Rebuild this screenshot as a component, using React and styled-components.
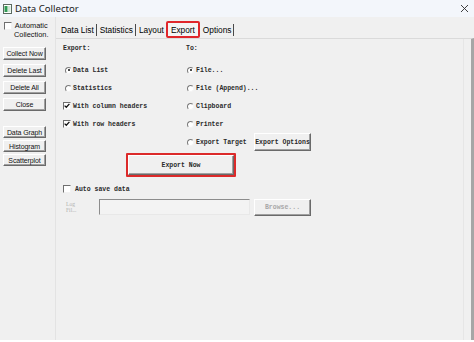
import React from "react";
import styled, { createGlobalStyle } from "styled-components";

const Global = createGlobalStyle`
  html, body { margin: 0; padding: 0; background: #ffffff; }
  * { box-sizing: border-box; }
`;

const Window = styled.div`
  width: 474px;
  height: 342px;
  display: flex;
  flex-direction: column;
  background: #f0f0f0;
  overflow: hidden;
  font-family: "Liberation Sans", Arial, sans-serif;
`;

const TitleBar = styled.div`
  height: 17px;
  flex: none;
  display: flex;
  align-items: center;
  padding: 0 5px 0 3px;
  background: #f3f6fb;
`;

const TitleText = styled.span`
  font-family: "Noto Sans", "Open Sans", sans-serif;
  font-size: 9.6px;
  color: #1b1b1b;
  margin-left: 3px;
  flex: 1;
`;

const Body = styled.div`
  flex: 1;
  display: flex;
  min-height: 0;
  border-bottom: 2px solid #ffffff;
`;

const Sidebar = styled.div`
  width: 56px;
  flex: none;
  display: flex;
  flex-direction: column;
  padding: 5px 0 0 3px;
  border-right: 1px solid #e3e3e3;
`;

const AutoRow = styled.div`
  display: flex;
  align-items: flex-start;
  gap: 2px;
  padding-left: 1px;
`;

const AutoText = styled.span`
  font-size: 7.4px;
  line-height: 9px;
  color: #111;
  text-align: center;
  margin-top: -1px;
`;

const SideGroup = styled.div`
  display: flex;
  flex-direction: column;
  gap: ${(p) => p.$gap}px;
  margin-top: ${(p) => p.$top}px;
`;

const ClassicButton = styled.button`
  background: #f0f0f0;
  border: 1px solid;
  border-color: #ffffff #6a6a6a #6a6a6a #ffffff;
  box-shadow: inset -1px -1px 0 #a0a0a0;
  padding: 0;
  margin: 0;
  display: flex;
  align-items: center;
  justify-content: center;
  cursor: default;
`;

const SideButton = styled(ClassicButton)`
  width: 43px;
  height: ${(p) => p.$h || 13}px;
  font-family: "Liberation Sans", Arial, sans-serif;
  font-size: 7px;
  color: #111;
  white-space: nowrap;
  letter-spacing: -0.1px;
`;

const Main = styled.div`
  flex: 1;
  display: flex;
  flex-direction: column;
  min-width: 0;
`;

const TabsRow = styled.div`
  height: 21px;
  flex: none;
  display: flex;
  align-items: flex-end;
  padding-left: 2px;
`;

const Tab = styled.div`
  font-size: 8.3px;
  color: #000;
  white-space: nowrap;
  display: flex;
  align-items: center;
  height: ${(p) => (p.$active ? 17 : 12)}px;
  margin-bottom: ${(p) => (p.$active ? 0 : 2)}px;
  padding: ${(p) => (p.$active ? "0 3px" : "0 2px 0 3px")};
  border-right: ${(p) => (p.$sep ? "1px solid #4a4a4a" : "none")};
  ${(p) =>
    p.$active &&
    `
    border: 2px solid #e0262b;
    border-radius: 2px;
    background: #f4f4f4;
  `}
`;

const Panel = styled.div`
  flex: 1;
  border-top: 1px solid #dadada;
  border-right: 3px solid #a6a6a6;
  display: flex;
  min-height: 0;
`;

const PanelInner = styled.div`
  width: 408px;
  border-right: 1px solid #e6e6e6;
  padding-left: 7px;
  display: flex;
  flex-direction: column;
`;

const Columns = styled.div`
  display: flex;
`;

const Col = styled.div`
  width: ${(p) => p.$w}px;
  display: flex;
  flex-direction: column;
`;

const Row = styled.div`
  height: 18px;
  display: flex;
  align-items: center;
  gap: ${(p) => p.$gap ?? 2}px;
  padding-left: ${(p) => p.$pl || 0}px;
  margin-top: ${(p) => p.$mt || 0}px;
`;

const Mono = styled.span`
  font-family: "Liberation Mono", "Courier New", monospace;
  font-weight: bold;
  font-size: 6.5px;
  color: ${(p) => (p.$disabled ? "#a8a8a8" : "#2a2a2a")};
  white-space: nowrap;
`;

const Radio = styled.span`
  width: 7px;
  height: 7px;
  flex: none;
  border-radius: 50%;
  background: #ffffff;
  border: 1px solid;
  border-color: #7a7a7a #f4f4f4 #f4f4f4 #7a7a7a;
  display: flex;
  align-items: center;
  justify-content: center;
  &::after {
    content: "";
    width: 2px;
    height: 2px;
    border-radius: 50%;
    background: ${(p) => (p.$checked ? "#111" : "transparent")};
  }
`;

const CheckBox = styled.span`
  width: 8px;
  height: 8px;
  flex: none;
  background: #ffffff;
  border: 1px solid;
  border-color: #6f6f6f #f2f2f2 #f2f2f2 #6f6f6f;
  display: flex;
  align-items: center;
  justify-content: center;
`;

const OptionsButton = styled(ClassicButton)`
  width: 57px;
  height: 18px;
  margin-left: auto;
`;

const RedFrame = styled.div`
  width: 110px;
  height: 24px;
  margin: 2px 0 0 63px;
  border: 2px solid #dc2a2a;
  border-radius: 1px;
  display: flex;
`;

const ExportNowButton = styled(ClassicButton)`
  flex: 1;
`;

const LogLabel = styled.div`
  width: 36px;
  padding-left: 3px;
  font-family: "Liberation Serif", serif;
  font-size: 5.6px;
  line-height: 6px;
  color: #b0b0b0;
  display: flex;
  flex-direction: column;
`;

const TextBox = styled.div`
  width: 151px;
  height: 16px;
  background: #f3f3f3;
  border: 1px solid;
  border-color: #8c8c8c #e8e8e8 #e8e8e8 #8c8c8c;
`;

const BrowseButton = styled(ClassicButton)`
  width: 57px;
  height: 17px;
  margin-left: 4px;
`;

const Check = () => (
  <svg width="6" height="6" viewBox="0 0 6 6">
    <path d="M0.6 2.6 L2.3 4.3 L5.4 0.9" fill="none" stroke="#111" strokeWidth="1.3" />
  </svg>
);

const AppIcon = () => (
  <svg width="9" height="10" viewBox="0 0 9 10">
    <rect x="0.5" y="0.5" width="8" height="9" fill="#ffffff" stroke="#5a6a60" />
    <rect x="1.5" y="2" width="3" height="6" fill="#2f9a55" />
    <rect x="5" y="2" width="2.5" height="6" fill="#cfe7d6" />
  </svg>
);

const CloseIcon = () => (
  <svg width="9" height="9" viewBox="0 0 9 9">
    <path d="M1 1 L8 8 M8 1 L1 8" stroke="#2b2b2b" strokeWidth="0.9" />
  </svg>
);

export default function App() {
  return (
    <>
      <Global />
      <Window>
        <TitleBar>
          <AppIcon />
          <TitleText>Data Collector</TitleText>
          <CloseIcon />
        </TitleBar>
        <Body>
          <Sidebar>
            <AutoRow>
              <CheckBox />
              <AutoText>
                Automatic
                <br />
                Collection.
              </AutoText>
            </AutoRow>
            <SideGroup $gap={4} $top={8}>
              <SideButton>Collect Now</SideButton>
              <SideButton>Delete Last</SideButton>
              <SideButton>Delete All</SideButton>
              <SideButton>Close</SideButton>
            </SideGroup>
            <SideGroup $gap={2} $top={15}>
              <SideButton $h={12}>Data Graph</SideButton>
              <SideButton $h={12}>Histogram</SideButton>
              <SideButton $h={12}>Scatterplot</SideButton>
            </SideGroup>
          </Sidebar>
          <Main>
            <TabsRow>
              <Tab $sep>Data List</Tab>
              <Tab $sep>Statistics</Tab>
              <Tab>Layout</Tab>
              <Tab $active>Export</Tab>
              <Tab $sep>Options</Tab>
            </TabsRow>
            <Panel>
              <PanelInner>
                <Columns>
                  <Col $w={123}>
                    <Row>
                      <Mono>Export:</Mono>
                    </Row>
                    <Row $mt={4} $pl={2} $gap={1}>
                      <Radio $checked />
                      <Mono>Data List</Mono>
                    </Row>
                    <Row $pl={2} $gap={1}>
                      <Radio />
                      <Mono>Statistics</Mono>
                    </Row>
                    <Row>
                      <CheckBox>
                        <Check />
                      </CheckBox>
                      <Mono>With column headers</Mono>
                    </Row>
                    <Row>
                      <CheckBox>
                        <Check />
                      </CheckBox>
                      <Mono>With row headers</Mono>
                    </Row>
                  </Col>
                  <Col $w={125}>
                    <Row>
                      <Mono>To:</Mono>
                    </Row>
                    <Row $mt={4} $pl={1}>
                      <Radio $checked />
                      <Mono>File...</Mono>
                    </Row>
                    <Row $pl={1}>
                      <Radio />
                      <Mono>File (Append)...</Mono>
                    </Row>
                    <Row $pl={1}>
                      <Radio />
                      <Mono>Clipboard</Mono>
                    </Row>
                    <Row $pl={1}>
                      <Radio />
                      <Mono>Printer</Mono>
                    </Row>
                    <Row $pl={1}>
                      <Radio />
                      <Mono>Export Target</Mono>
                      <OptionsButton>
                        <Mono>Export Options</Mono>
                      </OptionsButton>
                    </Row>
                  </Col>
                </Columns>
                <RedFrame>
                  <ExportNowButton>
                    <Mono>Export Now</Mono>
                  </ExportNowButton>
                </RedFrame>
                <Row $mt={3} $gap={4}>
                  <CheckBox />
                  <Mono>Auto save data</Mono>
                </Row>
                <Row $gap={0}>
                  <LogLabel>
                    <span>Log</span>
                    <span>Fil...</span>
                  </LogLabel>
                  <TextBox />
                  <BrowseButton>
                    <Mono $disabled>Browse...</Mono>
                  </BrowseButton>
                </Row>
              </PanelInner>
            </Panel>
          </Main>
        </Body>
      </Window>
    </>
  );
}
